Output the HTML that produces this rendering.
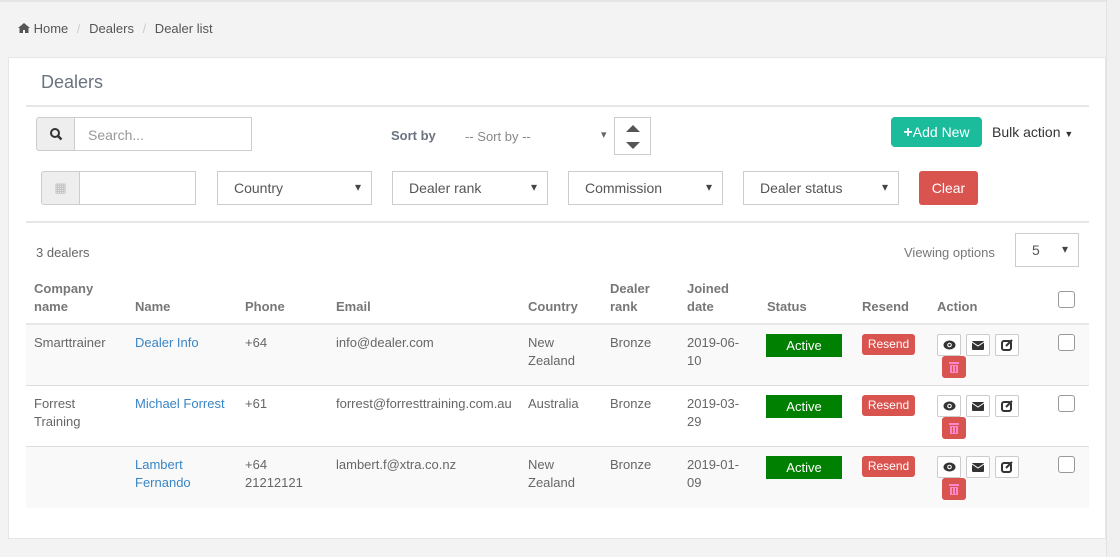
<!DOCTYPE html>
<html><head><style>
*{box-sizing:border-box;margin:0;padding:0}
body{width:1120px;height:557px;background:#f3f3f3;font-family:"Liberation Sans",sans-serif;font-size:13px;color:#555;position:relative;overflow:hidden}
.a{position:absolute}
.bc{left:0;top:0;width:1120px;height:2px;background:#e5e5e5}
.sb{left:1106px;top:0;width:14px;height:557px;background:#f0f0f0;border-left:1px solid #e2e2e2}
.card{left:8px;top:57px;width:1098px;height:482px;background:#fff;border:1px solid #e6e6e6}
.sel{background:#fff;border:1px solid #ccc;height:34px;font-size:14px;color:#555;padding:8px 16px}
.sel:after{content:"▾";position:absolute;right:10px;top:8px;font-size:12px;color:#444}
.hr{height:2px;background:#e7e7e7}
.th{font-weight:bold;color:#777;font-size:13px;line-height:18px}
.td{font-size:13px;line-height:18px;color:#666}
.lk{color:#3a85c6}
.act{background:#008000;color:#fff;font-size:13px;width:76px;height:23px;text-align:center;line-height:23px}
.rs{background:#d9534f;color:#fff;font-size:12px;width:53px;height:21px;text-align:center;line-height:21px;border-radius:3px}
.ib{width:24px;height:22px;border:1px solid #ccc;background:#fff;border-radius:2px;display:flex;align-items:center;justify-content:center}
.del{width:24px;height:22px;background:#d9534f;border-radius:3px;display:flex;align-items:center;justify-content:center}
.cb{width:17px;height:17px;border:1px solid #999;border-radius:3px;background:#fff}
</style></head><body>
<div class="a bc"></div>
<div class="a sb"></div>
<div class="a" style="left:18px;top:21px;font-size:13px;color:#555"><svg width="12" height="10" viewBox="0 0 12 10"><path d="M6 0L0 5h1.5v5h3.5V7h2v3h3.5V5H12z" fill="#555"/></svg> Home <span style="color:#ccc;margin:0 5px">/</span> Dealers <span style="color:#ccc;margin:0 5px">/</span> Dealer list</div>
<div class="a card"></div>
<div class="a" style="left:41px;top:72px;font-size:18px;color:#6b7380">Dealers</div>
<div class="a hr" style="left:26px;top:105px;width:1063px"></div>
<div class="a" style="left:36px;top:117px;width:39px;height:34px;background:#eee;border:1px solid #ccc;border-radius:3px 0 0 3px"><svg width="14" height="14" viewBox="0 0 14 14" style="position:absolute;left:12px;top:9px"><circle cx="6" cy="6" r="4" fill="none" stroke="#333" stroke-width="2"/><line x1="9" y1="9" x2="12.5" y2="12.5" stroke="#333" stroke-width="2.4"/></svg></div>
<div class="a" style="left:74px;top:117px;width:178px;height:34px;border:1px solid #ccc;padding:9px 13px;font-size:14px;color:#999">Search...</div>
<div class="a" style="left:391px;top:128px;font-weight:bold;color:#6b7380;font-size:13px">Sort by</div>
<div class="a" style="left:465px;top:129px;color:#888;font-size:13px">-- Sort by --</div>
<div class="a" style="left:601px;top:128px;font-size:11px;color:#666">▾</div>
<div class="a" style="left:614px;top:117px;width:37px;height:38px;border:1px solid #ccc;background:#fff"><div class="a" style="left:11px;top:7px;border:7px solid transparent;border-bottom:7px solid #555;border-top:0"></div><div class="a" style="left:11px;top:24px;border:7px solid transparent;border-top:7px solid #555;border-bottom:0"></div></div>
<div class="a" style="left:891px;top:117px;width:91px;height:30px;background:#1abc9c;border-radius:4px;color:#fff;font-size:14px;text-align:center;line-height:30px"><b style="font-size:16px">+</b>Add New</div>
<div class="a" style="left:992px;top:124px;font-size:14px;color:#333">Bulk action <span style="font-size:9px">▼</span></div>
<div class="a" style="left:41px;top:171px;width:39px;height:34px;background:#eee;border:1px solid #ccc;border-radius:3px 0 0 3px;color:#bbb;text-align:center;line-height:32px;font-size:13px">▦</div>
<div class="a" style="left:79px;top:171px;width:117px;height:34px;border:1px solid #ccc;background:#fff"></div>
<div class="a sel" style="left:217px;top:171px;width:155px">Country</div>
<div class="a sel" style="left:392px;top:171px;width:156px">Dealer rank</div>
<div class="a sel" style="left:568px;top:171px;width:155px">Commission</div>
<div class="a sel" style="left:743px;top:171px;width:156px">Dealer status</div>
<div class="a" style="left:919px;top:171px;width:59px;height:34px;background:#d9534f;border-radius:3px;color:#fff;font-size:14px;text-align:center;line-height:34px">Clear</div>
<div class="a hr" style="left:26px;top:221px;width:1063px"></div>
<div class="a" style="left:36px;top:245px;color:#666">3 dealers</div>
<div class="a" style="left:904px;top:245px;color:#777">Viewing options</div>
<div class="a sel" style="left:1015px;top:233px;width:64px;padding:8px 16px">5</div>
<div class="a th" style="left:34px;top:280px">Company<br>name</div>
<div class="a th" style="left:135px;top:298px">Name</div>
<div class="a th" style="left:245px;top:298px">Phone</div>
<div class="a th" style="left:336px;top:298px">Email</div>
<div class="a th" style="left:528px;top:298px">Country</div>
<div class="a th" style="left:610px;top:280px">Dealer<br>rank</div>
<div class="a th" style="left:687px;top:280px">Joined<br>date</div>
<div class="a th" style="left:767px;top:298px">Status</div>
<div class="a th" style="left:862px;top:298px">Resend</div>
<div class="a th" style="left:937px;top:298px">Action</div>
<div class="a cb" style="left:1058px;top:291px"></div>
<div class="a hr" style="left:26px;top:323px;width:1063px"></div>
<div class="a" style="left:26px;top:325px;width:1063px;height:61px;background:#f9f9f9;border-bottom:1px solid #ddd"></div>
<div class="a" style="left:26px;top:386px;width:1063px;height:61px;background:#fff;border-bottom:1px solid #ddd"></div>
<div class="a" style="left:26px;top:447px;width:1063px;height:61px;background:#f9f9f9"></div>

<div class="a td" style="left:34px;top:334px">Smarttrainer</div>
<div class="a td lk" style="left:135px;top:334px">Dealer Info</div>
<div class="a td" style="left:245px;top:334px">+64</div>
<div class="a td" style="left:336px;top:334px">info@dealer.com</div>
<div class="a td" style="left:528px;top:334px">New<br>Zealand</div>
<div class="a td" style="left:610px;top:334px">Bronze</div>
<div class="a td" style="left:687px;top:334px">2019-06-<br>10</div>

<div class="a td" style="left:34px;top:395px">Forrest<br>Training</div>
<div class="a td lk" style="left:135px;top:395px">Michael Forrest</div>
<div class="a td" style="left:245px;top:395px">+61</div>
<div class="a td" style="left:336px;top:395px">forrest@forresttraining.com.au</div>
<div class="a td" style="left:528px;top:395px">Australia</div>
<div class="a td" style="left:610px;top:395px">Bronze</div>
<div class="a td" style="left:687px;top:395px">2019-03-<br>29</div>

<div class="a td lk" style="left:135px;top:456px">Lambert<br>Fernando</div>
<div class="a td" style="left:245px;top:456px">+64<br>21212121</div>
<div class="a td" style="left:336px;top:456px">lambert.f@xtra.co.nz</div>
<div class="a td" style="left:528px;top:456px">New<br>Zealand</div>
<div class="a td" style="left:610px;top:456px">Bronze</div>
<div class="a td" style="left:687px;top:456px">2019-01-<br>09</div>

<div class="a act" style="left:766px;top:334px">Active</div>
<div class="a rs" style="left:862px;top:334px">Resend</div>
<div class="a act" style="left:766px;top:395px">Active</div>
<div class="a rs" style="left:862px;top:395px">Resend</div>
<div class="a act" style="left:766px;top:456px">Active</div>
<div class="a rs" style="left:862px;top:456px">Resend</div>

<div class="a" style="left:937px;top:334px;display:flex;gap:5px">
<div class="ib"><svg width="13" height="10"><ellipse cx="6.5" cy="5" rx="6" ry="4.5" fill="#333"/><circle cx="6.5" cy="5" r="2.3" fill="#fff"/><circle cx="6.5" cy="5" r="1.2" fill="#333"/></svg></div>
<div class="ib"><svg width="12" height="9"><rect width="12" height="9" rx="1" fill="#333"/><path d="M0 1 L6 5 L12 1" stroke="#fff" fill="none"/></svg></div>
<div class="ib"><svg width="12" height="12"><rect x="1" y="2" width="9" height="9" rx="2" fill="none" stroke="#333" stroke-width="2"/><path d="M5 7 L11 1" stroke="#333" stroke-width="2"/></svg></div></div>
<div class="a del" style="left:942px;top:356px"><svg width="10" height="11"><rect x="0" y="0" width="10" height="2" fill="#f8c"/><rect x="1" y="3" width="8" height="8" fill="#f8c"/><path d="M3.5 4v6M6.5 4v6" stroke="#d9534f"/></svg></div>
<div class="a" style="left:937px;top:395px;display:flex;gap:5px">
<div class="ib"><svg width="13" height="10"><ellipse cx="6.5" cy="5" rx="6" ry="4.5" fill="#333"/><circle cx="6.5" cy="5" r="2.3" fill="#fff"/><circle cx="6.5" cy="5" r="1.2" fill="#333"/></svg></div>
<div class="ib"><svg width="12" height="9"><rect width="12" height="9" rx="1" fill="#333"/><path d="M0 1 L6 5 L12 1" stroke="#fff" fill="none"/></svg></div>
<div class="ib"><svg width="12" height="12"><rect x="1" y="2" width="9" height="9" rx="2" fill="none" stroke="#333" stroke-width="2"/><path d="M5 7 L11 1" stroke="#333" stroke-width="2"/></svg></div></div>
<div class="a del" style="left:942px;top:417px"><svg width="10" height="11"><rect x="0" y="0" width="10" height="2" fill="#f8c"/><rect x="1" y="3" width="8" height="8" fill="#f8c"/><path d="M3.5 4v6M6.5 4v6" stroke="#d9534f"/></svg></div>
<div class="a" style="left:937px;top:456px;display:flex;gap:5px">
<div class="ib"><svg width="13" height="10"><ellipse cx="6.5" cy="5" rx="6" ry="4.5" fill="#333"/><circle cx="6.5" cy="5" r="2.3" fill="#fff"/><circle cx="6.5" cy="5" r="1.2" fill="#333"/></svg></div>
<div class="ib"><svg width="12" height="9"><rect width="12" height="9" rx="1" fill="#333"/><path d="M0 1 L6 5 L12 1" stroke="#fff" fill="none"/></svg></div>
<div class="ib"><svg width="12" height="12"><rect x="1" y="2" width="9" height="9" rx="2" fill="none" stroke="#333" stroke-width="2"/><path d="M5 7 L11 1" stroke="#333" stroke-width="2"/></svg></div></div>
<div class="a del" style="left:942px;top:478px"><svg width="10" height="11"><rect x="0" y="0" width="10" height="2" fill="#f8c"/><rect x="1" y="3" width="8" height="8" fill="#f8c"/><path d="M3.5 4v6M6.5 4v6" stroke="#d9534f"/></svg></div>

<div class="a cb" style="left:1058px;top:334px"></div>
<div class="a cb" style="left:1058px;top:395px"></div>
<div class="a cb" style="left:1058px;top:456px"></div>
</body></html>
